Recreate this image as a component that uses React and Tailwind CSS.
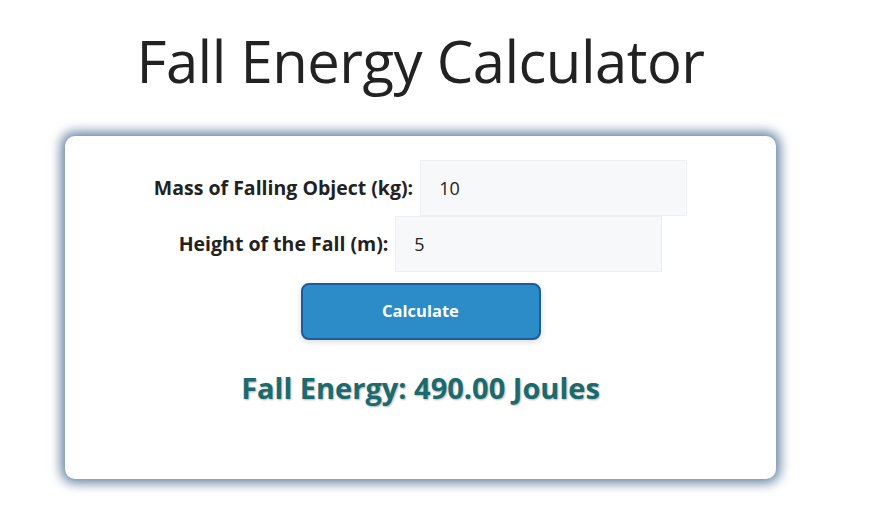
import React, { useState } from "react";

const font = { fontFamily: '"Open Sans", "Noto Sans", sans-serif' };

const Row = ({ label, value, onChange }) => (
  <div className="flex justify-center items-center">
    <label className="text-[19.5px] font-bold text-[#222] mr-[7px]">{label}</label>
    <input
      type="text"
      value={value}
      onChange={(e) => onChange(e.target.value)}
      className="w-[267px] h-[56px] bg-[#f7f8fa] border border-[#eceef0] px-[18px] text-[18px] text-[#222] outline-none"
    />
  </div>
);

export default function App() {
  const [mass, setMass] = useState("10");
  const [height, setHeight] = useState("5");
  const [energy, setEnergy] = useState(490);

  const calculate = () => {
    setEnergy(parseFloat(mass) * 9.8 * parseFloat(height));
  };

  return (
    <div className="w-[877px] h-[522px] bg-white overflow-hidden" style={font}>
      <div className="w-[711px] ml-[65px]">
        <h1 className="text-center text-[58px] leading-none font-normal text-[#222] pt-[32px] tracking-[-0.5px]">
          Fall Energy Calculator
        </h1>
        <div className="mt-[46px] h-[343px] bg-white rounded-[10px] shadow-[0_0_12px_4px_rgba(50,85,130,0.75)] pt-[24px]">
          <Row label="Mass of Falling Object (kg):" value={mass} onChange={setMass} />
          <Row label="Height of the Fall (m):" value={height} onChange={setHeight} />
          <div className="flex justify-center mt-[11px]">
            <button
              onClick={calculate}
              className="w-[240px] h-[57px] bg-[#2b8cc7] border-2 border-[#1b5c9e] rounded-[8px] text-white text-[16.5px] font-bold shadow-[0_2px_6px_rgba(0,0,0,0.15)]"
            >
              Calculate
            </button>
          </div>
          <p className="text-center mt-[26px] text-[29px] font-bold text-[#1b6b6e] [text-shadow:1px_1px_2px_rgba(0,0,0,0.3)]">
            Fall Energy: {energy.toFixed(2)} Joules
          </p>
        </div>
      </div>
    </div>
  );
}
